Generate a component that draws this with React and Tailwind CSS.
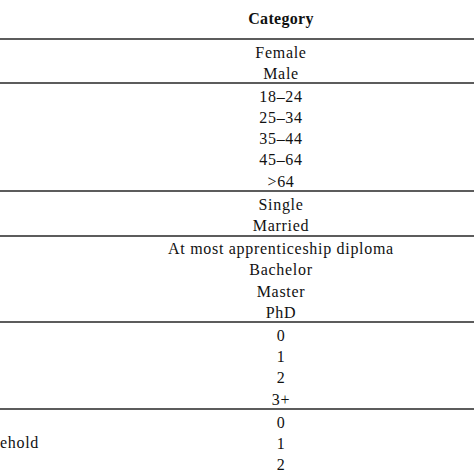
import React from 'react';

const groups = [
  { label: 'Gender', rows: ['Female', 'Male'] },
  { label: 'Age', rows: ['18–24', '25–34', '35–44', '45–64', '>64'] },
  { label: 'Marital status', rows: ['Single', 'Married'] },
  { label: 'Education', rows: ['At most apprenticeship diploma', 'Bachelor', 'Master', 'PhD'] },
  { label: 'Children', rows: ['0', '1', '2', '3+'] },
  { label: 'Number of children in household', rows: ['0', '1', '2'], show: true },
];

export default function App() {
  return (
    <div
      className="w-[474px] h-[474px] overflow-hidden bg-white text-[#111] text-[16px] tracking-[0.7px]"
      style={{ fontFamily: '"Liberation Serif", serif' }}
    >
      {/* header */}
      <div className="flex h-[38px] items-center">
        <div className="w-[88px]" />
        <div className="flex-1 text-center font-bold tracking-[0.3px] pb-[1px]">Category</div>
      </div>

      {groups.map((g) => (
        <div key={g.label} className="flex border-t-2 border-[#5c5c5c]">
          <div className="w-[88px] flex items-center justify-end pr-[49px] pt-[2px] whitespace-nowrap">
            {g.show ? g.label : null}
          </div>
          <div className="flex-1 flex flex-col">
            {g.rows.map((r, i) => (
              <div key={i} className="h-[21.2px] leading-[21.2px] pt-[1.5px] box-content -mb-[1.5px] text-center whitespace-nowrap">
                {r}
              </div>
            ))}
          </div>
        </div>
      ))}
    </div>
  );
}
